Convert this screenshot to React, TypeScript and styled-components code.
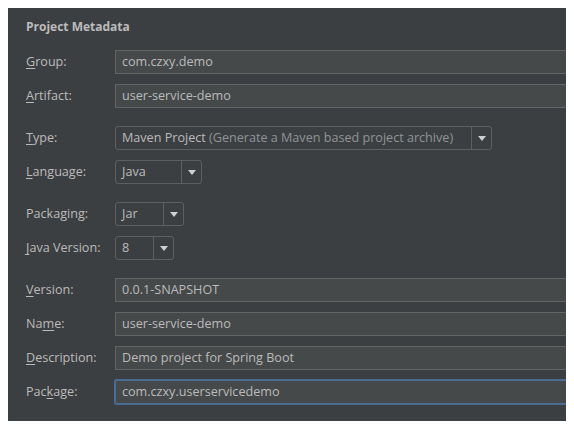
import styled, { createGlobalStyle } from 'styled-components';

const GlobalStyle = createGlobalStyle`
  body {
    margin: 8px;
    background: #ffffff;
    font-family: 'Open Sans', 'Noto Sans', sans-serif;
  }
`;

interface FieldRow {
  label: [string, string, string];
  value: string;
  focused?: boolean;
}

interface ComboRow {
  label: [string, string, string];
  value: string;
  hint?: string;
  width: number;
}

const groupOne: FieldRow[] = [
  { label: ['', 'G', 'roup:'], value: 'com.czxy.demo' },
  { label: ['', 'A', 'rtifact:'], value: 'user-service-demo' },
];

const groupTwo: ComboRow[] = [
  {
    label: ['', 'T', 'ype:'],
    value: 'Maven Project',
    hint: '(Generate a Maven based project archive)',
    width: 377,
  },
  { label: ['', 'L', 'anguage:'], value: 'Java', width: 87 },
];

const groupThree: ComboRow[] = [
  { label: ['Packa', 'g', 'ing:'], value: 'Jar', width: 69 },
  { label: ['', 'J', 'ava Version:'], value: '8', width: 59 },
];

const groupFour: FieldRow[] = [
  { label: ['', 'V', 'ersion:'], value: '0.0.1-SNAPSHOT' },
  { label: ['Na', 'm', 'e:'], value: 'user-service-demo' },
  { label: ['', 'D', 'escription:'], value: 'Demo project for Spring Boot' },
  { label: ['Pac', 'k', 'age:'], value: 'com.czxy.userservicedemo', focused: true },
];

function LabelText({ parts }: { parts: [string, string, string] }) {
  return (
    <Label>
      {parts[0]}
      <Mnemonic>{parts[1]}</Mnemonic>
      {parts[2]}
    </Label>
  );
}

function TextRow({ row }: { row: FieldRow }) {
  return (
    <Row>
      <LabelText parts={row.label} />
      <TextField $focused={row.focused}>{row.value}</TextField>
    </Row>
  );
}

function ComboBoxRow({ row }: { row: ComboRow }) {
  return (
    <Row>
      <LabelText parts={row.label} />
      <Combo style={{ width: row.width }}>
        <ComboValue>
          {row.value}
          {row.hint && <Hint> {row.hint}</Hint>}
        </ComboValue>
        <ArrowBox>
          <Arrow />
        </ArrowBox>
      </Combo>
    </Row>
  );
}

export default function App() {
  return (
    <>
      <GlobalStyle />
      <Panel>
        <Title>Project Metadata</Title>
        <Groups>
          <Group>
            {groupOne.map((r) => (
              <TextRow key={r.value} row={r} />
            ))}
          </Group>
          <Group>
            {groupTwo.map((r) => (
              <ComboBoxRow key={r.value} row={r} />
            ))}
          </Group>
          <Group>
            {groupThree.map((r) => (
              <ComboBoxRow key={r.value} row={r} />
            ))}
          </Group>
          <Group>
            {groupFour.map((r) => (
              <TextRow key={r.label.join('')} row={r} />
            ))}
          </Group>
        </Groups>
      </Panel>
    </>
  );
}

const Panel = styled.div`
  width: 558px;
  height: 413px;
  box-sizing: border-box;
  background: #3c3f41;
  padding: 11px 0 0 18px;
  overflow: hidden;
  box-shadow: 2px 3px 3px rgba(0, 0, 0, 0.55);
  color: #bbbbbb;
  font-size: 12.6px;
`;

const Title = styled.div`
  font-weight: bold;
  font-size: 12px;
  line-height: 16px;
  height: 16px;
  margin-bottom: 15px;
`;

const Groups = styled.div`
  display: flex;
  flex-direction: column;
  gap: 18px;
`;

const Group = styled.div`
  display: flex;
  flex-direction: column;
  gap: 10px;
`;

const Row = styled.div`
  display: flex;
  align-items: center;
  height: 24px;
`;

const Label = styled.div`
  width: 89px;
  flex-shrink: 0;
  line-height: 24px;
  white-space: nowrap;
`;

const Mnemonic = styled.span`
  text-decoration: underline;
  text-underline-offset: 2px;
`;

const TextField = styled.div<{ $focused?: boolean }>`
  flex: 1;
  height: 24px;
  box-sizing: border-box;
  margin-right: -4px;
  background: #45494a;
  border: 1px solid #646464;
  padding-left: 6px;
  line-height: 22px;
  white-space: nowrap;
  ${(p) =>
    p.$focused &&
    `
    border-color: #466d94;
    box-shadow: 0 0 0 1px #466d94;
    border-radius: 2px;
  `}
`;

const Combo = styled.div`
  display: flex;
  height: 24px;
  box-sizing: border-box;
  border: 1px solid #5e6060;
  border-radius: 3px;
  background: #3c3f41;
`;

const ComboValue = styled.div`
  flex: 1;
  padding-left: 6px;
  line-height: 22px;
  white-space: nowrap;
  overflow: hidden;
`;

const Hint = styled.span`
  color: #8f9496;
`;

const ArrowBox = styled.div`
  width: 19px;
  border-left: 1px solid #5e6060;
  display: flex;
  align-items: center;
  justify-content: center;
`;

const Arrow = styled.div`
  width: 0;
  height: 0;
  border-left: 4px solid transparent;
  border-right: 4px solid transparent;
  border-top: 5px solid #cfcfcf;
`;
